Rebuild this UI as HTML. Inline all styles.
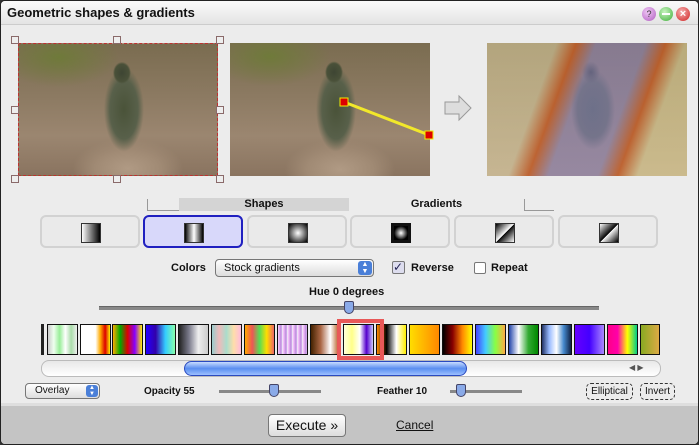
<!DOCTYPE html>
<html><head><meta charset="utf-8"><style>
*{margin:0;padding:0;box-sizing:border-box}
body{width:699px;height:445px;overflow:hidden;background:#333;font-family:"Liberation Sans",sans-serif;font-size:11px;color:#111}
.win{position:absolute;left:0;top:0;width:699px;height:445px;background:#ececec;border:1px solid #222;border-radius:5px;overflow:hidden}
.a{position:absolute}
.title{left:0;top:0;width:697px;height:24px;background:linear-gradient(#fafafa,#e4e4e4);border-bottom:1px solid #ccc}
.img{background:
radial-gradient(ellipse 9px 11px at 52% 22%,#3e4533 0,#4a5139 80%,transparent 100%),
radial-gradient(ellipse 20px 42px at 53% 50%,#4a5339 0,#58604a 70%,transparent 100%),
radial-gradient(ellipse 55px 30px at 55% 95%,#b09a84 0,#a08a74 60%,transparent 100%),
radial-gradient(ellipse 60px 30px at 20% 10%,#6f7a3a 0,transparent 100%),
linear-gradient(#7a6c50,#8c7a62 40%,#9b8670 70%,#8a7460)}
.h{width:8px;height:8px;border:1px solid #8a6a6a;background:#eee}
.tb{top:214px;width:100px;height:33px;border:2px solid #d2d2d2;border-radius:6px;background:#eaeaea}
.tb i{position:absolute;left:39px;top:6px;width:20px;height:20px;border:1px solid #333}
.sw{position:absolute;top:323px;width:31px;height:31px;border:1px solid #111}
.btn{border:1px solid #777;border-radius:4px;background:linear-gradient(#fff,#ddd)}
</style></head><body><div class="win">
<div class="a title"></div>
<div class="a" style="left:6px;top:4px;font-size:13px;font-weight:bold">Geometric shapes &amp; gradients</div>
<div class="a" style="left:641px;top:6px;width:14px;height:14px;border-radius:50%;background:radial-gradient(circle at 40% 35%,#f0c8f5,#b05cc0);font-size:9px;text-align:center;line-height:14px;color:#333">?</div>
<div class="a" style="left:658px;top:6px;width:14px;height:14px;border-radius:50%;background:radial-gradient(circle at 40% 35%,#c8f5c0,#3fae3a)"><div class="a" style="left:3px;top:6px;width:8px;height:2px;background:#fff"></div></div>
<div class="a" style="left:675px;top:6px;width:14px;height:14px;border-radius:50%;background:radial-gradient(circle at 40% 35%,#f5b0b0,#d02020);color:#fff;font-size:11px;text-align:center;line-height:14px;font-weight:bold">×</div>

<div class="a img" style="left:17px;top:42px;width:200px;height:133px;border:1px dashed #c03030"></div>
<div class="a h" style="left:10px;top:35px"></div><div class="a h" style="left:112px;top:35px"></div><div class="a h" style="left:215px;top:35px"></div>
<div class="a h" style="left:10px;top:105px"></div><div class="a h" style="left:215px;top:105px"></div>
<div class="a h" style="left:10px;top:174px"></div><div class="a h" style="left:112px;top:174px"></div><div class="a h" style="left:215px;top:174px"></div>
<div class="a img" style="left:229px;top:42px;width:200px;height:133px"></div>
<svg class="a" style="left:229px;top:42px" width="210" height="133"><line x1="114" y1="59" x2="199" y2="92" stroke="#f2e82a" stroke-width="3"/><rect x="110" y="55" width="8" height="8" fill="#d00" stroke="#ee0"/><rect x="195" y="88" width="8" height="8" fill="#d00" stroke="#ee0"/></svg>
<svg class="a" style="left:442px;top:93px" width="30" height="30"><path d="M2 8h14V2l12 12-12 12v-6H2z" fill="#ddd" stroke="#999"/></svg>
<div class="a" style="left:486px;top:42px;width:200px;height:133px;background:linear-gradient(110deg,rgba(255,240,180,.35) 0,rgba(255,240,180,.35) 28%,rgba(200,80,20,.7) 36%,rgba(130,120,200,.45) 44%,rgba(130,120,200,.45) 64%,rgba(200,80,20,.7) 72%,rgba(255,240,160,.4) 80%),radial-gradient(ellipse 9px 11px at 52% 22%,#4a5240,transparent 100%),radial-gradient(ellipse 22px 40px at 53% 50%,#5d6a55,#6a7058 70%,transparent 100%),linear-gradient(#8a7c60,#a89680)"></div>

<div class="a" style="left:146px;top:198px;width:2px;height:12px;border-left:1px solid #999"></div>
<div class="a" style="left:146px;top:209px;width:32px;border-top:1px solid #999"></div>
<div class="a" style="left:178px;top:197px;width:170px;height:13px;background:#d4d4d4;text-align:center;font-weight:bold">Shapes</div>
<div class="a" style="left:348px;top:197px;width:175px;text-align:center;font-weight:bold">Gradients</div>
<div class="a" style="left:523px;top:198px;height:12px;border-left:1px solid #999;width:30px;border-bottom:1px solid #999"></div>

<div class="a tb" style="left:39px"><i style="background:linear-gradient(90deg,#fff,#000)"></i></div>
<div class="a tb" style="left:142px;border-color:#2020c0;background:#d8d8fa"><i style="background:linear-gradient(90deg,#000,#fff,#000)"></i></div>
<div class="a tb" style="left:246px"><i style="background:radial-gradient(#fff,#000)"></i></div>
<div class="a tb" style="left:349px"><i style="background:radial-gradient(closest-side,#fff,#000);border:3px solid #111"></i></div>
<div class="a tb" style="left:453px"><i style="background:linear-gradient(135deg,#000,#fff 50%,#000 50%,#fff)"></i></div>
<div class="a tb" style="left:557px"><i style="background:linear-gradient(135deg,#fff,#000 50%,#fff 50%,#000)"></i></div>

<div class="a" style="left:170px;top:261px;font-weight:bold;font-size:11px">Colors</div>
<div class="a btn" style="left:214px;top:258px;width:159px;height:18px;padding:2px 8px">Stock gradients<div class="a" style="right:1px;top:1px;width:14px;height:14px;border-radius:3px;background:#4a7fd8;color:#fff;font-size:7px;text-align:center;line-height:7px">▲<br>▼</div></div>
<div class="a" style="left:391px;top:260px;width:13px;height:13px;border:1px solid #777;border-radius:2px;background:#dde;color:#225;font-size:12px;line-height:11px">✓</div>
<div class="a" style="left:410px;top:261px;font-weight:bold">Reverse</div>
<div class="a" style="left:473px;top:261px;width:12px;height:12px;border:1px solid #777;border-radius:2px;background:#fff"></div>
<div class="a" style="left:490px;top:261px;font-weight:bold">Repeat</div>
<div class="a" style="left:308px;top:285px;font-weight:bold">Hue 0 degrees</div>
<div class="a" style="left:98px;top:305px;width:500px;height:4px;background:#888;border-top:1px solid #666"></div>
<div class="a" style="left:343px;top:300px;width:10px;height:13px;border:1px solid #446;border-radius:2px 2px 5px 5px;background:#8aaae8"></div>

<div class="a" style="left:40px;top:323px;width:3px;height:31px;background:#222"></div>
<div class="sw" style="left:46px;background:linear-gradient(90deg,#ccc,#efe,#9e9,#fff,#ada,#eee)"></div>
<div class="sw" style="left:79px;background:linear-gradient(90deg,#fff 50%,#fa0,#d00,#fe0)"></div>
<div class="sw" style="left:111px;background:linear-gradient(90deg,#fa0,#0a0,#d00,#80f,#fe0)"></div>
<div class="sw" style="left:144px;background:linear-gradient(90deg,#20f,#30a,#3cf,#8fa)"></div>
<div class="sw" style="left:177px;background:linear-gradient(90deg,#222,#778,#eee,#ccc)"></div>
<div class="sw" style="left:210px;background:linear-gradient(90deg,#9cc,#ebb,#adc,#fda,#fbd)"></div>
<div class="sw" style="left:243px;background:linear-gradient(90deg,#fa0,#e55,#5d5,#fd0,#e66)"></div>
<div class="sw" style="left:276px;background:repeating-linear-gradient(90deg,#fcf 0,#b8d 3px,#fff 5px)"></div>
<div class="sw" style="left:309px;background:linear-gradient(90deg,#420,#a64,#fff,#a40)"></div>
<div class="sw" style="left:342px;background:linear-gradient(90deg,#ffd,#ff8,#fff 55%,#50c,#ccf)"></div>
<div class="sw" style="left:375px;background:linear-gradient(90deg,#f80,#000,#fff,#fe0)"></div>
<div class="sw" style="left:408px;background:linear-gradient(90deg,#fd0,#f80)"></div>
<div class="sw" style="left:441px;background:linear-gradient(90deg,#000,#800,#f80,#ff0)"></div>
<div class="sw" style="left:474px;background:linear-gradient(90deg,#44f,#4cf,#8f4,#fa4)"></div>
<div class="sw" style="left:507px;background:linear-gradient(90deg,#24a,#fff,#3a3,#080)"></div>
<div class="sw" style="left:540px;background:linear-gradient(90deg,#236,#9bf,#fff,#48c,#124)"></div>
<div class="sw" style="left:573px;background:linear-gradient(90deg,#60f,#40f,#a8f)"></div>
<div class="sw" style="left:606px;background:linear-gradient(90deg,#f08,#f0a,#ff0,#0c8)"></div>
<div class="sw" style="left:639px;width:20px;background:linear-gradient(90deg,#8a2,#da4)"></div>
<div class="a" style="left:336px;top:318px;width:47px;height:41px;border:4px solid #e85858"></div>

<div class="a" style="left:40px;top:359px;width:620px;height:17px;border:1px solid #bbb;border-radius:8px;background:linear-gradient(#e8e8e8,#fff)"></div>
<div class="a" style="left:183px;top:360px;width:283px;height:15px;border:1px solid #2a4ac0;border-radius:8px;background:linear-gradient(#c8dcff,#5a8ef0 50%,#9cc0ff)"></div>
<div class="a" style="left:628px;top:362px;font-size:8px;color:#555">◀ ▶</div>

<div class="a btn" style="left:24px;top:382px;width:75px;height:16px;padding:1px 9px;font-size:10px">Overlay<div class="a" style="right:1px;top:1px;width:12px;height:12px;border-radius:3px;background:#4a7fd8;color:#fff;font-size:6px;text-align:center;line-height:6px">▲<br>▼</div></div>
<div class="a" style="left:143px;top:385px;font-weight:bold;font-size:10px">Opacity 55</div>
<div class="a" style="left:218px;top:389px;width:102px;height:3px;background:#888"></div>
<div class="a" style="left:268px;top:383px;width:10px;height:13px;border:1px solid #446;border-radius:2px 2px 5px 5px;background:#8aaae8"></div>
<div class="a" style="left:376px;top:385px;font-weight:bold;font-size:10px">Feather 10</div>
<div class="a" style="left:449px;top:389px;width:72px;height:3px;background:#888"></div>
<div class="a" style="left:455px;top:383px;width:10px;height:13px;border:1px solid #446;border-radius:2px 2px 5px 5px;background:#8aaae8"></div>
<div class="a" style="left:585px;top:382px;width:47px;height:17px;border:1px dashed #333;border-radius:5px;font-size:10px;text-align:center;line-height:15px">Elliptical</div>
<div class="a" style="left:639px;top:382px;width:35px;height:17px;border:1px dashed #333;border-radius:5px;font-size:10px;text-align:center;line-height:15px">Invert</div>

<div class="a" style="left:0;top:402px;width:699px;height:43px;background:#c4c4c4;border-top:3px solid #dedede"></div>
<div class="a btn" style="left:267px;top:413px;width:78px;height:23px;font-size:14px;text-align:center;line-height:21px">Execute »</div>
<div class="a" style="left:395px;top:417px;font-size:12px;text-decoration:underline">Cancel</div>
</div></body></html>
